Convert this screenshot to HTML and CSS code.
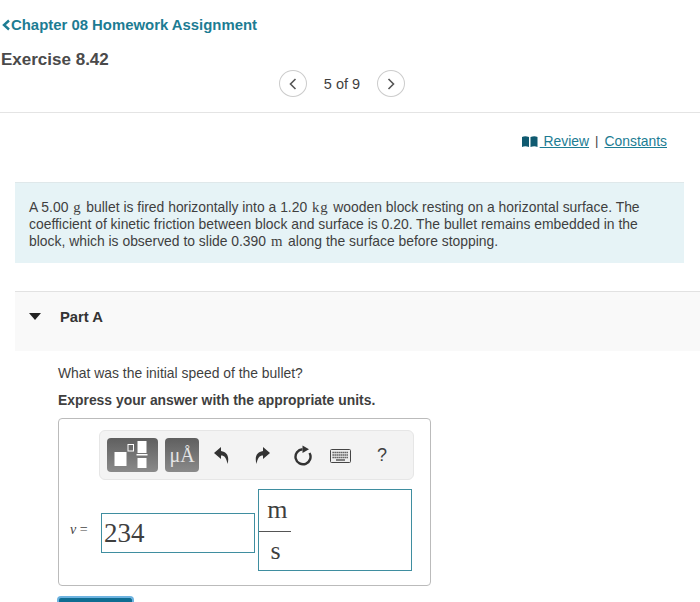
FILE: index.html
```html
<!DOCTYPE html>
<html lang="en">
<head>
    <meta charset="UTF-8">
    <title>Exercise 8.42</title>
    <link rel="stylesheet" href="styles.css">
</head>
<body>
    <header class="top">
        <a class="back" href="#"><svg class="back-icon" width="10" height="12" viewBox="0 0 10 12"><path d="M8 1.500 3 6l5 4.500" fill="none" stroke="#1c7c93" stroke-width="2.400"/></svg>Chapter 08 Homework Assignment</a>
        <h1 class="title">Exercise 8.42</h1>
        <div class="pager">
            <button class="round"><svg width="10" height="14" viewBox="0 0 10 14"><path d="M7.500 2 2.500 7l5 5" fill="none" stroke="#555" stroke-width="1.600"/></svg></button>
            <span class="count">5 of 9</span>
            <button class="round"><svg width="10" height="14" viewBox="0 0 10 14"><path d="M2.500 2l5 5-5 5" fill="none" stroke="#555" stroke-width="1.600"/></svg></button>
        </div>
    </header>

    <div class="links">
        <a href="#"><svg class="book" width="16" height="11" viewBox="0 0 16 11"><path d="M0 1q3-1.500 7 0v10q-4-1.500-7 0zM8.500 1q4-1.500 7 0v10q-3-1.500-7 0z" fill="#0f5a70"/></svg>&nbsp;Review</a>
        <span class="sep">|</span>
        <a href="#">Constants</a>
    </div>

    <section class="problem">
        A 5.00 <span class="unit">g</span> bullet is fired horizontally into a 1.20 <span class="unit">kg</span> wooden block resting on a horizontal surface. The coefficient of kinetic friction between block and surface is 0.20. The bullet remains embedded in the block, which is observed to slide 0.390 <span class="unit">m</span> along the surface before stopping.
    </section>

    <section class="part-head">
        <span class="caret"></span>
        <span class="part-name">Part A</span>
    </section>

    <section class="part-body">
        <p class="question">What was the initial speed of the bullet?</p>
        <p class="hint">Express your answer with the appropriate units.</p>

        <div class="answer">
            <div class="toolbar">
                <div class="tool tool-wide">
                    <svg width="44" height="30" viewBox="0 0 44 30">
                        <rect x="3.500" y="12" width="12" height="14" fill="#fff"/>
                        <rect x="17" y="4.500" width="5.500" height="6.500" fill="none" stroke="#fff"/>
                        <rect x="26.500" y="1" width="9" height="12" fill="#fff"/>
                        <rect x="25.500" y="14" width="11" height="1.500" fill="#fff"/>
                        <rect x="26.500" y="18" width="9" height="10" fill="#fff"/>
                    </svg>
                </div>
                <div class="tool tool-unit">μÅ</div>
                <svg class="icon undo" width="15" height="17" viewBox="0 0 15 17"><path d="M7 0 0 6l7 6V8.500c3.500 0 5.500 2.500 6.500 8.500 2-7 0-12-6.500-13z" fill="#333"/></svg>
                <svg class="icon redo" width="15" height="17" viewBox="0 0 15 17"><path d="M8 0l7 6-7 6V8.500c-3.500 0-5.500 2.500-6.500 8.500-2-7 0-12 6.500-13z" fill="#333"/></svg>
                <svg class="icon reset" width="19" height="21" viewBox="0 0 19 21"><path d="M9.500 4.300a7.500 7.500 0 1 0 7 3.700" fill="none" stroke="#333" stroke-width="2.400"/><path d="M9.500 .5v7.600l6.500-3.800z" fill="#333"/></svg>
                <svg class="icon keys" width="21" height="14" viewBox="0 0 21 14"><rect x=".5" y=".5" width="20" height="13" rx="1" fill="#eee" stroke="#444"/><path d="M2.500 3.500h16M2.500 6h16M2.500 8.500h16" stroke="#444" stroke-width="1.300" stroke-dasharray="1.300 .7"/><path d="M6 11h9" stroke="#444" stroke-width="1.300"/></svg>
                <span class="help">?</span>
            </div>

            <div class="entry">
                <span class="var"><i>v</i> =</span>
                <div class="field field-value">234</div>
                <div class="field field-unit">
                    <span class="frac-top">m</span>
                    <span class="frac-line"></span>
                    <span class="frac-bottom">s</span>
                </div>
            </div>
        </div>

        <div class="submit"></div>
    </section>
</body>
</html>
```

FILE: styles.css
```css
html, body {
    height: 602px;
    overflow: hidden;
}
body {
    margin: 0;
    background-color: #fff;
    font-family: "Liberation Sans", Arial, sans-serif;
    color: #3f3f3f;
}
a {
    color: #1c7c93;
}

.top {
    height: 96px;
    padding-top: 16px;
    border-bottom: 1px solid #e4e4e4;
}
.back {
    display: block;
    padding-left: 1px;
    font-size: 14.9px;
    line-height: 18px;
    font-weight: bold;
    text-decoration: none;
}
.back-icon {
    vertical-align: -1px;
}
.title {
    margin: 16px 0 0 1px;
    font-size: 17px;
    line-height: 20px;
    color: #4a4a4a;
}
.pager {
    display: flex;
    align-items: center;
    margin: 0 0 0 279px;
}
.round {
    width: 28px;
    height: 27px;
    padding: 0;
    display: flex;
    align-items: center;
    justify-content: center;
    background-color: #fff;
    border: 1px solid #ccc;
    border-radius: 50%;
}
.count {
    width: 70px;
    text-align: center;
    font-size: 14.5px;
}

.links {
    display: flex;
    justify-content: flex-end;
    gap: 6px;
    height: 18px;
    margin-top: 19px;
    padding-right: 33px;
    font-size: 13.9px;
    line-height: 18px;
}
.book {
    margin-right: 2px;
    vertical-align: -1px;
}
.sep {
    color: #444;
    font-size: 13px;
}

.problem {
    height: 81px;
    box-sizing: border-box;
    margin: 32px 16px 0 15px;
    padding: 16px 14px 12px;
    border-top: 1px solid #dfe8ea;
    background-color: #e6f3f6;
    font-size: 13.9px;
    line-height: 17px;
}
.unit {
    margin: 0 1px;
    font-family: "Liberation Serif", serif;
    font-size: 14.8px;
    letter-spacing: .8px;
}

.part-head {
    display: flex;
    align-items: center;
    height: 60px;
    margin: 28px 0 0 15px;
    padding-bottom: 10px;
    box-sizing: border-box;
    border-top: 1px solid #e2e2e2;
    background-color: #f9f9f9;
}
.caret {
    width: 0;
    height: 0;
    margin-left: 14px;
    border-left: 6px solid transparent;
    border-right: 6px solid transparent;
    border-top: 7px solid #222;
}
.part-name {
    margin-left: 19px;
    font-size: 14.8px;
    font-weight: bold;
    color: #333;
}

.part-body {
    padding-left: 58px;
}
.question {
    margin: 14px 0 0;
    font-size: 13.9px;
    line-height: 17px;
}
.hint {
    margin: 10px 0 0;
    font-size: 13.9px;
    line-height: 17px;
    font-weight: bold;
}

.answer {
    width: 373px;
    height: 168px;
    margin-top: 9px;
    box-sizing: border-box;
    padding: 11px 18px 0 40px;
    border: 1px solid #bbb;
    border-radius: 4px;
}
.toolbar {
    display: flex;
    align-items: center;
    width: 315px;
    height: 50px;
    box-sizing: border-box;
    padding-left: 7px;
    background-color: #f3f3f3;
    border: 1px solid #e6e6e6;
    border-radius: 6px;
}
.tool {
    height: 34px;
    display: flex;
    align-items: center;
    justify-content: center;
    border-radius: 4px;
    background: linear-gradient(#5f5f5f, #8a8a8a);
}
.tool-wide {
    width: 51px;
}
.tool-unit {
    width: 34px;
    margin-left: 7px;
    color: #e4e4e4;
    font-family: "Liberation Serif", serif;
    font-size: 20px;
}
.icon {
    margin-top: 1px;
}
.undo {
    margin-left: 15px;
}
.redo {
    margin-left: 26px;
}
.reset {
    margin-left: 23px;
}
.keys {
    margin-left: 18px;
}
.help {
    margin-left: 26px;
    font-size: 18px;
}

.entry {
    display: flex;
    align-items: center;
    margin: 9px 0 0 -29px;
}
.var {
    width: 31px;
    font-family: "Liberation Serif", serif;
    font-size: 14px;
    color: #444;
}
.field {
    box-sizing: border-box;
    background-color: #fff;
    border: 1px solid #3f8ea0;
    font-family: "Liberation Serif", serif;
}
.field-value {
    width: 155px;
    height: 40px;
    margin-top: 6px;
    padding-left: 2px;
    font-size: 27px;
    line-height: 38px;
}
.field-unit {
    display: flex;
    flex-direction: column;
    width: 154px;
    height: 82px;
    margin-left: 3px;
    font-size: 26px;
    line-height: 27px;
}
.frac-top, .frac-bottom {
    width: 32px;
    text-align: center;
}
.frac-top {
    margin: 6px 0 0 2px;
}
.frac-line {
    width: 32px;
    height: 1px;
    margin: 8px 0 5px;
    background-color: #555;
}

.submit {
    width: 77px;
    height: 12px;
    margin: 10px 0 0 -1px;
    box-sizing: border-box;
    background-color: #0f6d92;
    border: 2px solid #6db3e0;
    border-bottom: none;
    border-radius: 4px 4px 0 0;
}
```
